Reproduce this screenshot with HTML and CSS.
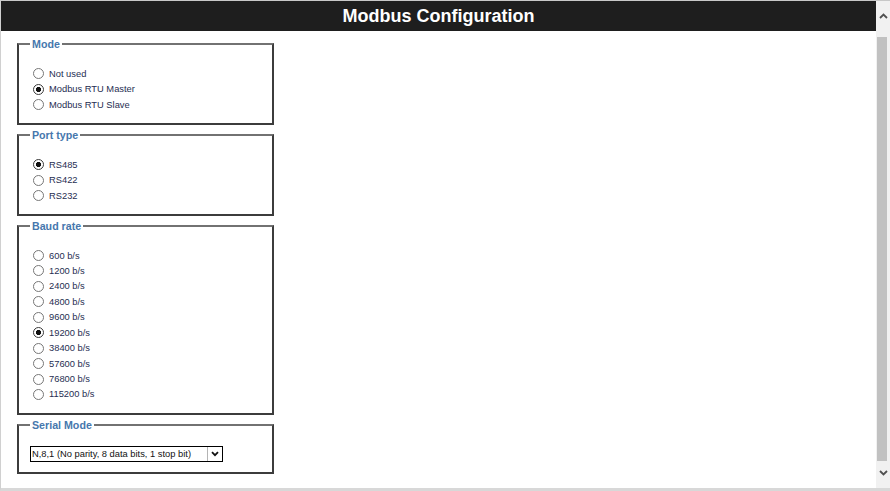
FILE: index.html
```html
<!DOCTYPE html>
<html lang="en">
<head>
<meta charset="utf-8">
<title>Modbus Configuration</title>
<link rel="stylesheet" href="styles.css">
</head>
<body>
<div class="frame">
  <div class="main">
    <header class="title">Modbus Configuration</header>
    <form class="content">
      <fieldset class="group">
        <legend>Mode</legend>
        <label class="opt"><input type="radio" name="mode"> Not used</label>
        <label class="opt"><input type="radio" name="mode" checked> Modbus RTU Master</label>
        <label class="opt"><input type="radio" name="mode"> Modbus RTU Slave</label>
      </fieldset>
      <fieldset class="group">
        <legend>Port type</legend>
        <label class="opt"><input type="radio" name="port" checked> RS485</label>
        <label class="opt"><input type="radio" name="port"> RS422</label>
        <label class="opt"><input type="radio" name="port"> RS232</label>
      </fieldset>
      <fieldset class="group">
        <legend>Baud rate</legend>
        <label class="opt"><input type="radio" name="baud"> 600 b/s</label>
        <label class="opt"><input type="radio" name="baud"> 1200 b/s</label>
        <label class="opt"><input type="radio" name="baud"> 2400 b/s</label>
        <label class="opt"><input type="radio" name="baud"> 4800 b/s</label>
        <label class="opt"><input type="radio" name="baud"> 9600 b/s</label>
        <label class="opt"><input type="radio" name="baud" checked> 19200 b/s</label>
        <label class="opt"><input type="radio" name="baud"> 38400 b/s</label>
        <label class="opt"><input type="radio" name="baud"> 57600 b/s</label>
        <label class="opt"><input type="radio" name="baud"> 76800 b/s</label>
        <label class="opt"><input type="radio" name="baud"> 115200 b/s</label>
      </fieldset>
      <fieldset class="group group-select">
        <legend>Serial Mode</legend>
        <div class="select-wrap">
          <select class="select">
            <option>N,8,1 (No parity, 8 data bits, 1 stop bit)</option>
          </select>
          <span class="select-arrow"><svg width="8" height="6" viewBox="0 0 8 6"><path d="M1 1.2 L4 4.2 L7 1.2" fill="none" stroke="#111" stroke-width="1.8"/></svg></span>
        </div>
      </fieldset>
    </form>
  </div>
  <div class="scrollbar">
    <div class="sb-btn sb-up"><svg width="9" height="6" viewBox="0 0 9 6"><path d="M1 5 L4.5 1.5 L8 5" fill="none" stroke="#505050" stroke-width="1.8"/></svg></div>
    <div class="sb-track"><div class="sb-thumb"></div></div>
    <div class="sb-btn sb-down"><svg width="9" height="6" viewBox="0 0 9 6"><path d="M1 1 L4.5 4.5 L8 1" fill="none" stroke="#505050" stroke-width="1.8"/></svg></div>
  </div>
</div>
</body>
</html>
```
FILE: styles.css
```css
html, body {
  margin: 0;
  padding: 0;
  background: #ffffff;
}

body {
  font-family: "Liberation Sans", Arial, sans-serif;
}

.frame {
  display: flex;
  width: 890px;
  height: 491px;
  box-sizing: border-box;
  border-top: 1px solid #c8c8c8;
  border-left: 1px solid #d0d0d0;
  border-bottom: 3px solid #d8d8d8;
  overflow: hidden;
}

.main {
  flex: 1;
  min-width: 0;
  display: flex;
  flex-direction: column;
}

.title {
  height: 30px;
  line-height: 30px;
  background: #1e1e1e;
  color: #ffffff;
  font-weight: bold;
  font-size: 18px;
  text-align: center;
}

.content {
  display: flex;
  flex-direction: column;
  align-items: flex-start;
  padding: 7px 0 0 16px;
  margin: 0;
}

.group {
  box-sizing: border-box;
  width: 257px;
  margin: 0 0 4px 0;
  padding: 16px 0 10.6px 11px;
  border: 2px solid #3c3c3c;
  border-top-color: #727272;
  display: flex;
  flex-direction: column;
  align-items: flex-start;
}

.group legend {
  padding: 0 2px;
  font-size: 10.67px;
  line-height: 12px;
  font-weight: bold;
  color: #4677ad;
}

.opt {
  display: flex;
  align-items: center;
  height: 15.44px;
  font-size: 9.33px;
  color: #1f2e52;
}

.opt input {
  appearance: none;
  -webkit-appearance: none;
  box-sizing: border-box;
  width: 11px;
  height: 11px;
  margin: 0 5px 0 3px;
  border: 1px solid #777777;
  border-radius: 50%;
  background: #ffffff;
  flex: none;
}

.opt input:checked {
  border-color: #3a3a3a;
  background: radial-gradient(circle, #111111 0, #111111 2.3px, #ffffff 2.9px);
}

.group-select {
  padding-top: 15px;
  padding-bottom: 10px;
}

.select-wrap {
  display: flex;
  box-sizing: border-box;
  width: 193px;
  height: 16px;
  border: 1px solid #000000;
  background: #ffffff;
}

.select {
  appearance: none;
  -webkit-appearance: none;
  flex: 1;
  min-width: 0;
  height: 14px;
  margin: 0;
  padding: 0 0 0 1px;
  border: none;
  border-radius: 0;
  outline: none;
  background: #ffffff;
  font-family: "Liberation Sans", Arial, sans-serif;
  font-size: 9.33px;
  color: #111111;
  line-height: 14px;
}

.select-arrow {
  width: 15px;
  height: 14px;
  flex: none;
  box-sizing: border-box;
  border-left: 1px solid #b4b4b4;
  display: flex;
  align-items: center;
  justify-content: center;
}

.scrollbar {
  width: 14px;
  flex: none;
  background: #f1f1f1;
  display: flex;
  flex-direction: column;
}

.sb-btn {
  display: flex;
  justify-content: center;
  padding-left: 1px;
}

.sb-up {
  height: 35px;
  align-items: flex-start;
  padding-top: 12px;
  box-sizing: border-box;
}

.sb-down {
  height: 26px;
  align-items: flex-start;
  padding-top: 8px;
  box-sizing: border-box;
}

.sb-track {
  flex: 1;
  display: flex;
  padding: 1px 0 1px 1px;
}

.sb-thumb {
  width: 10px;
  background: #c1c1c1;
}
```
